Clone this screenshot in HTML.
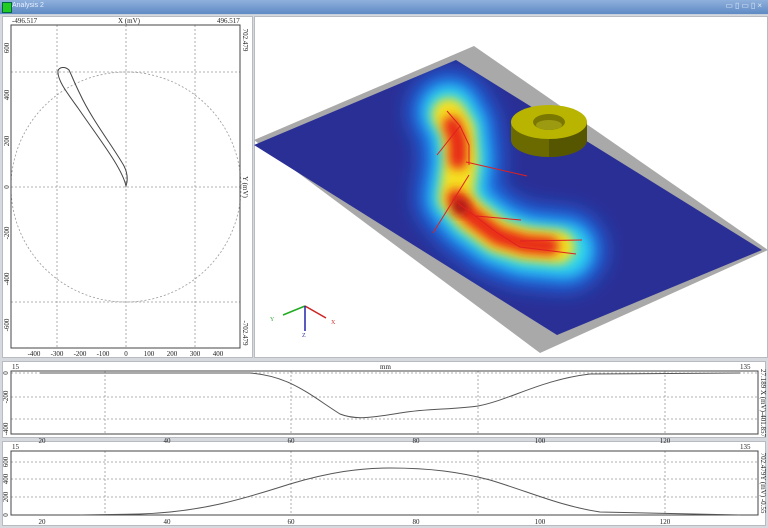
<!DOCTYPE html>
<html><head><meta charset="utf-8"><style>
body{margin:0;width:768px;height:528px;background:#d6dadf;font-family:"Liberation Sans",sans-serif;overflow:hidden;position:relative}
.title{position:absolute;left:0;top:0;width:768px;height:14px;background:linear-gradient(#8fb0dc,#5f8ac4);border-bottom:1px solid #c8d0da}
.pan{position:absolute;background:#fff;border:1px solid #b8bcc2}
svg text{font-family:"Liberation Serif",serif;font-size:7px;fill:#222}
</style></head><body>
<div class="title"><div style="position:absolute;left:2px;top:2px;width:8px;height:9px;background:#2c2;border:1px solid #064"></div><span style="position:absolute;left:12px;top:2px;font-size:7px;color:#e8f0ff">Analysis 2</span>
<span style="position:absolute;right:4px;top:1px;font-size:8px;color:#dfe8f4;letter-spacing:2px">▭▯▭▯×</span></div>
<div class="pan" style="left:2px;top:16px;width:249px;height:340px"></div>
<div class="pan" style="left:254px;top:16px;width:512px;height:340px"></div>
<div class="pan" style="left:2px;top:361px;width:762px;height:75px"></div>
<div class="pan" style="left:2px;top:441px;width:762px;height:83px"></div>
<svg width="768" height="528" style="position:absolute;left:0;top:0">
<defs>
<filter id="b1" x="-50%" y="-50%" width="200%" height="200%"><feGaussianBlur stdDeviation="10"/></filter>
<filter id="b2" x="-50%" y="-50%" width="200%" height="200%"><feGaussianBlur stdDeviation="7"/></filter>
<filter id="b3" x="-50%" y="-50%" width="200%" height="200%"><feGaussianBlur stdDeviation="5"/></filter>
<clipPath id="cp"><polygon points="456,60 254,145 557,335 762,250"/></clipPath>
</defs>
<g stroke="#999" stroke-dasharray="2,2" stroke-width="0.8" fill="none">
<line x1="57" y1="25" x2="57" y2="348"/><line x1="126" y1="25" x2="126" y2="348"/><line x1="195" y1="25" x2="195" y2="348"/>
<line x1="11" y1="72" x2="240" y2="72"/><line x1="11" y1="187" x2="240" y2="187"/><line x1="11" y1="302" x2="240" y2="302"/>
<circle cx="126" cy="187" r="115"/>
</g>
<rect x="11" y="25" width="229" height="323" fill="none" stroke="#444"/>
<path d="M126,186 C122,168 100,140 78,108 C68,94 57,80 58,71 C59,67 65,66 69,70 C72,76 74,82 80,94 C92,120 114,148 124,166 C128,174 128,180 126,186 Z" fill="none" stroke="#444" stroke-width="1"/>
<text x="12" y="23">-496.517</text><text x="118" y="23">X (mV)</text><text x="217" y="23">496.517</text>
<g text-anchor="middle"><text x="34" y="356">-400</text><text x="57" y="356">-300</text><text x="80" y="356">-200</text><text x="103" y="356">-100</text><text x="126" y="356">0</text><text x="149" y="356">100</text><text x="172" y="356">200</text><text x="195" y="356">300</text><text x="218" y="356">400</text></g>
<g text-anchor="middle">
<text transform="translate(9,48) rotate(-90)">600</text><text transform="translate(9,95) rotate(-90)">400</text><text transform="translate(9,141) rotate(-90)">200</text><text transform="translate(9,187) rotate(-90)">0</text><text transform="translate(9,233) rotate(-90)">-200</text><text transform="translate(9,279) rotate(-90)">-400</text><text transform="translate(9,325) rotate(-90)">-600</text>
<text transform="translate(243,40) rotate(90)">702.479</text><text transform="translate(243,187) rotate(90)">Y (mV)</text><text transform="translate(243,333) rotate(90)">-702.479</text></g>
<polygon points="474,46 254,140 540,353 768,250" fill="#a9a9a9"/>
<polygon points="456,60 254,145 557,335 762,250" fill="#2a2f96"/>
<g clip-path="url(#cp)">
<path d="M449,112 L458,128 L462,160 L456,198 L470,215 L498,236 L525,246 L565,250" fill="none" stroke="#1c6fe8" stroke-width="80" stroke-linecap="round" stroke-linejoin="round" filter="url(#b1)"/>
<path d="M449,112 L458,128 L462,160 L456,198 L470,215 L498,236 L525,246 L565,250" fill="none" stroke="#2fd8f0" stroke-width="54" stroke-linecap="round" stroke-linejoin="round" filter="url(#b2)"/>
<path d="M449,115 L458,130 L461,160 L456,198 L470,215 L498,236 L525,244 L558,247" fill="none" stroke="#f5e020" stroke-width="34" stroke-linecap="round" stroke-linejoin="round" filter="url(#b3)"/>
<path d="M452,125 L458,140 L458,160 M456,198 L470,215 L498,236 L525,244 L550,246" fill="none" stroke="#e82818" stroke-width="18" stroke-linecap="round" stroke-linejoin="round" filter="url(#b3)"/>
<ellipse cx="460" cy="207" rx="8" ry="7" fill="#9a1818" filter="url(#b3)"/>
</g>
<g stroke="#e02020" stroke-width="1" fill="none">
<path d="M447,111 L460,126 L437,155"/><path d="M460,126 L469,145 L469,165"/><path d="M466,162 L527,176"/><path d="M469,175 L433,233"/><path d="M458,203 L496,232 L520,247 L576,254"/><path d="M476,216 L521,220"/><path d="M520,241 L582,240"/></g>
<path d="M511,122 L511,140 A38,17 0 0 0 587,140 L587,122 Z" fill="#6b6a00"/>
<path d="M549,122 L549,157 A38,17 0 0 0 587,140 L587,122 Z" fill="#565500"/>
<ellipse cx="549" cy="122" rx="38" ry="17" fill="#b8b400"/>
<ellipse cx="549" cy="122" rx="16" ry="8" fill="#7a7800"/>
<ellipse cx="549" cy="125" rx="13" ry="5" fill="#9c9a10"/>
<g stroke-width="1.5"><line x1="305" y1="306" x2="283" y2="315" stroke="#2a2"/><line x1="305" y1="306" x2="326" y2="318" stroke="#c22"/><line x1="305" y1="306" x2="305" y2="331" stroke="#22a"/></g>
<text x="270" y="321" style="fill:#3a3;font-size:6px">Y</text><text x="331" y="324" style="fill:#c33;font-size:6px">X</text><text x="302" y="337" style="fill:#33a;font-size:6px">Z</text>
<g stroke="#999" stroke-dasharray="2,2" stroke-width="0.8"><line x1="105" y1="371" x2="105" y2="434"/><line x1="291" y1="371" x2="291" y2="434"/><line x1="478" y1="371" x2="478" y2="434"/><line x1="665" y1="371" x2="665" y2="434"/>
<line x1="11" y1="373" x2="758" y2="373"/><line x1="11" y1="397" x2="758" y2="397"/><line x1="11" y1="419" x2="758" y2="419"/></g>
<rect x="11" y="371" width="747" height="63" fill="none" stroke="#444"/>
<path d="M40,373 L250,373 C290,376 310,395 340,414 C355,420 370,418 400,413 C430,408 450,410 478,406 C510,400 540,380 590,374 L740,373" fill="none" stroke="#555"/>
<text x="12" y="369">15</text><text x="740" y="369">135</text><text x="380" y="369">mm</text>
<g text-anchor="middle"><text x="42" y="443">20</text><text x="167" y="443">40</text><text x="291" y="443">60</text><text x="416" y="443">80</text><text x="540" y="443">100</text><text x="665" y="443">120</text>
<text transform="translate(8,373) rotate(-90)">0</text><text transform="translate(8,397) rotate(-90)">-200</text><text transform="translate(8,429) rotate(-90)">-400</text>
<text transform="translate(761,403) rotate(90)">27.189 X (mV)-401.857</text></g>
<g stroke="#999" stroke-dasharray="2,2" stroke-width="0.8"><line x1="105" y1="451" x2="105" y2="515"/><line x1="291" y1="451" x2="291" y2="515"/><line x1="478" y1="451" x2="478" y2="515"/><line x1="665" y1="451" x2="665" y2="515"/>
<line x1="11" y1="462" x2="758" y2="462"/><line x1="11" y1="479" x2="758" y2="479"/><line x1="11" y1="497" x2="758" y2="497"/></g>
<rect x="11" y="451" width="747" height="64" fill="none" stroke="#444"/>
<path d="M80,515 L140,514 C200,512 240,500 290,484 C330,472 360,468 390,468 C430,468 460,472 490,480 C530,492 560,506 600,512 L740,515" fill="none" stroke="#555"/>
<text x="12" y="449">15</text><text x="740" y="449">135</text>
<g text-anchor="middle"><text x="42" y="524">20</text><text x="167" y="524">40</text><text x="291" y="524">60</text><text x="416" y="524">80</text><text x="540" y="524">100</text><text x="665" y="524">120</text>
<text transform="translate(8,462) rotate(-90)">600</text><text transform="translate(8,479) rotate(-90)">400</text><text transform="translate(8,497) rotate(-90)">200</text><text transform="translate(8,515) rotate(-90)">0</text>
<text transform="translate(761,483) rotate(90)">702.479Y (mV)   -0.55</text></g>
</svg>
</body></html>
